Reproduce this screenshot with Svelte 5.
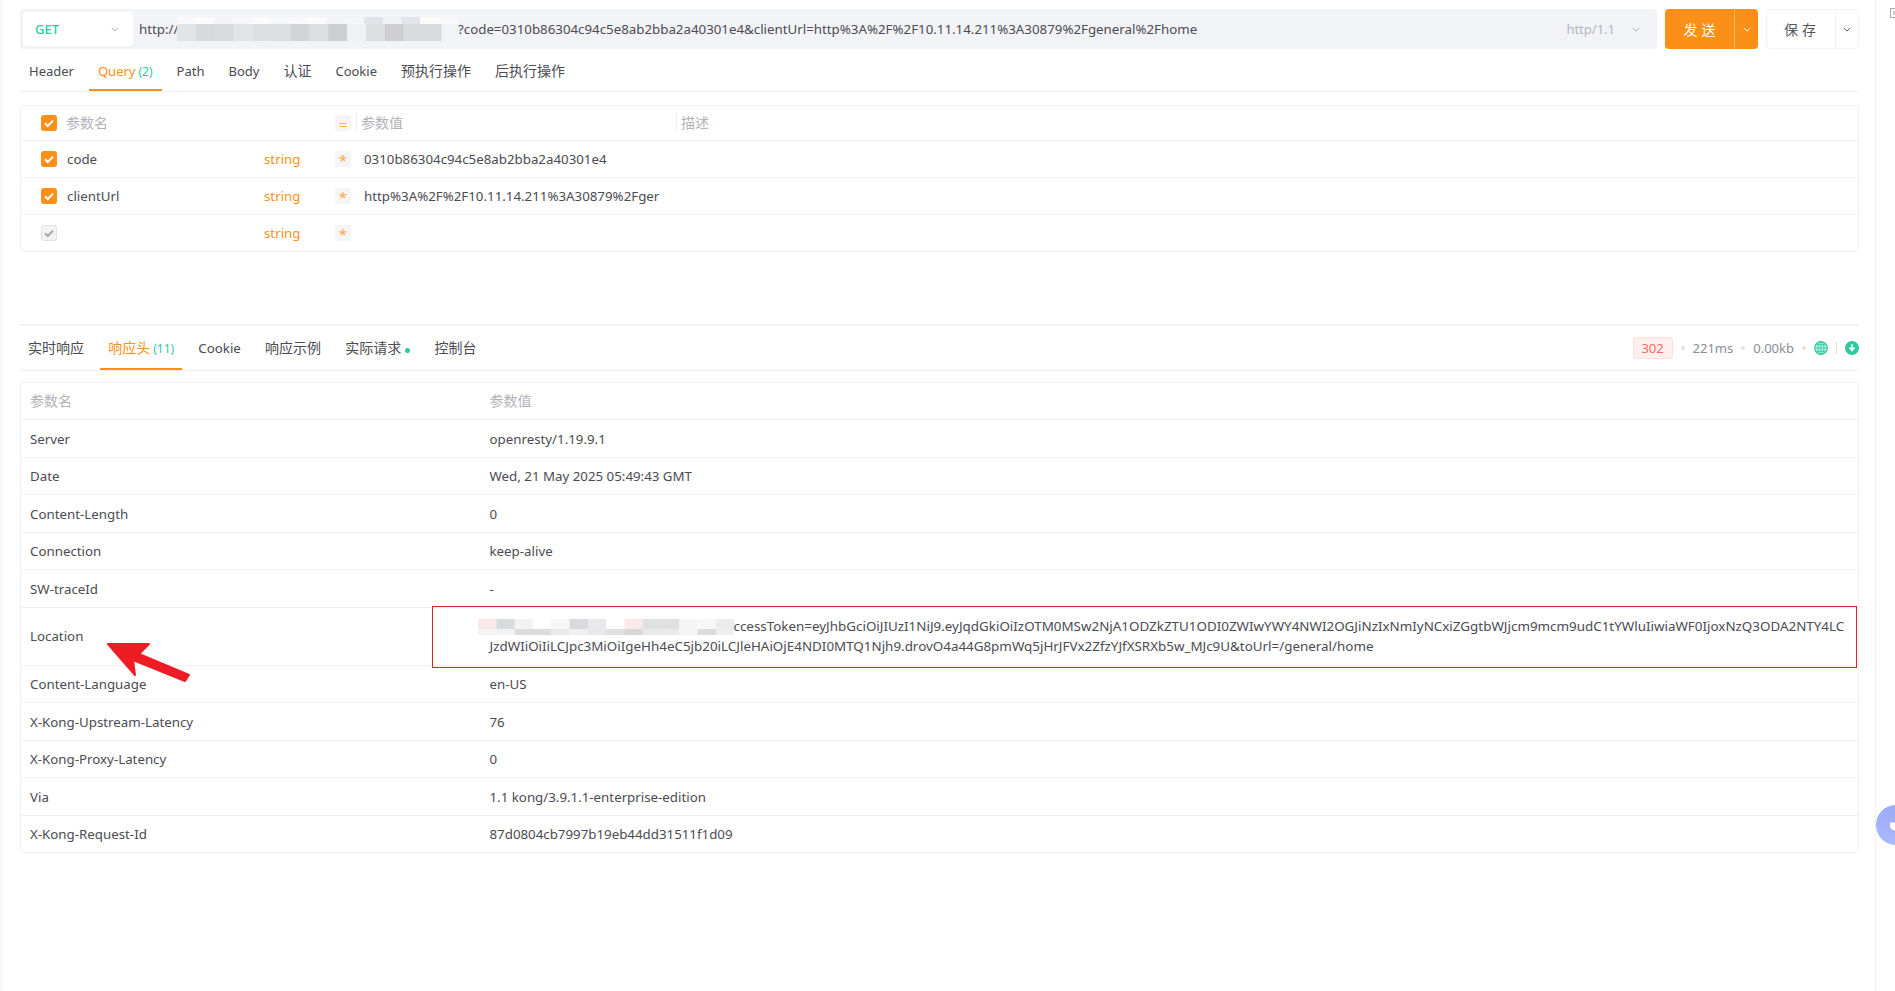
<script>
  const urlTop = ['#f9f9fb','#fbfbfc','#f3f4f8','#f8f8fa','#fbfbfc','#f7f8fa','#f9f9fb','#fbfbfc','#f2f3f7','#f5f6f9','#e2e4e9','#f0f1f5','#e3e5ea','#fbfbfc','#f9f9fb'];
  const urlBottom = ['#e2e5e8','#d8d9dd','#d9dadd','#e2e4e6','#dedfe2','#dcdee2','#d2d4d8','#dcdee1','#cdced1','#eff1f4','#dcdee2','#cfcfd1','#d9dade','#d9dadc'];
  const locTop = ['#fbe8ea','#d9dadb','#f2f2f2','#ffffff','#f5f6f6','#d9d9de','#e9e9eb','#ffffff','#fbe8ea','#e0e0e1','#e0e0e1','#f5f5f5','#f7f7f7','#ececec'];
  const locBottom = ['#f4f4f5','#f2f2f2','#dcdcdc','#dcdcdc','#eaeaea','#f0f0f0','#e8e8e8','#e0e0e2','#d8d8da','#e8e8e8','#eaeaea','#f5f5f5','#dcdcdc','#eeeeee'];

  const tabs = ['Header', 'Query', 'Path', 'Body', '认证', 'Cookie', '预执行操作', '后执行操作'];
  const isZh = (t) => /[^\x00-\x7f]/.test(t);
  const params = [
    { name: 'code', value: '0310b86304c94c5e8ab2bba2a40301e4', on: true },
    { name: 'clientUrl', value: 'http%3A%2F%2F10.11.14.211%3A30879%2Fger', on: true },
    { name: '', value: '', on: false }
  ];
  const headTop = [
    ['Server', 'openresty/1.19.9.1'],
    ['Date', 'Wed, 21 May 2025 05:49:43 GMT'],
    ['Content-Length', '0'],
    ['Connection', 'keep-alive'],
    ['SW-traceId', '-']
  ];
  const headBottom = [
    ['Content-Language', 'en-US'],
    ['X-Kong-Upstream-Latency', '76'],
    ['X-Kong-Proxy-Latency', '0'],
    ['Via', '1.1 kong/3.9.1.1-enterprise-edition'],
    ['X-Kong-Request-Id', '87d0804cb7997b19eb44dd31511f1d09']
  ];
</script>

{#snippet chevron(cls)}
  <svg class={cls} viewBox="0 0 10 6" width="8" height="5"><path d="M1 1l4 4 4-4" fill="none" stroke="currentColor" stroke-width="1.2"/></svg>
{/snippet}

{#snippet check(on)}
  <span class="chk" class:off={!on}>
    <svg viewBox="0 0 16 16" width="16" height="16"><path d="M4 8.2l2.8 2.8L12 5.6" fill="none" stroke={on ? '#fff' : '#a8a8a8'} stroke-width="2"/></svg>
  </span>
{/snippet}

<div class="page">
  <div class="strip"></div>
  <main class="main">
    <section class="request">
      <div class="toolbar">
        <div class="urlbar">
          <div class="method"><span>GET</span>{@render chevron('chev')}</div>
          <div class="url">
            <span class="scheme">http://</span>
            <svg class="mosaic-url" width="281" height="24" viewBox="0 0 281 24">
              {#each urlTop as c, i}<rect x={i * 18.7} y="0" width="19" height="7" fill={c} />{/each}
              {#each urlBottom as c, i}<rect x={i * 18.9} y="7" width="19" height="17" fill={c} />{/each}
            </svg>
            <span>?code=0310b86304c94c5e8ab2bba2a40301e4&amp;clientUrl=http%3A%2F%2F10.11.14.211%3A30879%2Fgeneral%2Fhome</span>
          </div>
          <div class="proto"><span>http/1.1</span>{@render chevron('chev')}</div>
        </div>
        <div class="send"><span class="send-l">发送</span><span class="send-r">{@render chevron('chev')}</span></div>
        <div class="save"><span class="save-l">保存</span><span class="save-r">{@render chevron('chev')}</span></div>
      </div>

      <nav class="tabs req-tabs">
        {#each tabs as t}
          <span class="tab" class:zh={isZh(t)} class:active={t === 'Query'}>{t}{#if t === 'Query'}<em>(2)</em>{/if}</span>
        {/each}
      </nav>

      <div class="qtable">
        <div class="qrow head">
          {@render check(true)}
          <span class="qname muted wide">参数名</span>
          <span class="tag eq">=</span>
          <span class="qval muted split">参数值</span>
          <span class="muted split desc">描述</span>
        </div>
        {#each params as p}
          <div class="qrow">
            {@render check(p.on)}
            <span class="qname">{p.name}</span>
            <span class="qtype">string</span>
            <span class="tag star">*</span>
            <span class="qval">{p.value}</span>
          </div>
        {/each}
      </div>
    </section>

    <section class="response">
      <div class="res-tabs-row">
        <nav class="tabs res-tabs">
          <span class="tab zh">实时响应</span>
          <span class="tab zh active">响应头<em>(11)</em></span>
          <span class="tab">Cookie</span>
          <span class="tab zh">响应示例</span>
          <span class="tab zh">实际请求<i class="live"></i></span>
          <span class="tab zh">控制台</span>
        </nav>
        <div class="status">
          <span class="code">302</span>
          <i class="sep"></i><span>221ms</span>
          <i class="sep"></i><span>0.00kb</span>
          <i class="sep"></i>
          <svg class="globe" viewBox="0 0 14 14" width="14" height="14">
            <circle cx="7" cy="7" r="6.3" fill="#dff6ee" stroke="#2bcb9f" stroke-width="1.2"/>
            <ellipse cx="7" cy="7" rx="3" ry="6.3" fill="none" stroke="#2bcb9f" stroke-width="1"/>
            <path d="M7 .7v12.6M.7 7h12.6M1.6 3.8h10.8M1.6 10.2h10.8" stroke="#2bcb9f" stroke-width="1" fill="none"/>
          </svg>
          <i class="bar"></i>
          <svg viewBox="0 0 14 14" width="14" height="14">
            <circle cx="7" cy="7" r="7" fill="#2bcb9f"/>
            <path d="M7 3.2v5M4.4 6.6L7 9.6l2.6-3" fill="none" stroke="#fff" stroke-width="1.6"/>
          </svg>
        </div>
      </div>

      <div class="rtable">
        <div class="rrow rhead"><span class="k">参数名</span><span class="v">参数值</span></div>
        {#each headTop as [k, v]}
          <div class="rrow"><span class="k">{k}</span><span class="v">{v}</span></div>
        {/each}
        <div class="rrow loc">
          <span class="k">Location</span>
          <span class="v locv">
            <svg class="mosaic-loc" width="256" height="16" viewBox="0 0 256 16">
              {#each locTop as c, i}<rect x={i * 18.3} y="0" width="18.5" height="10" fill={c} />{/each}
              {#each locBottom as c, i}<rect x={i * 18.3} y="10" width="18.5" height="6" fill={c} />{/each}
            </svg><span>ccessToken=eyJhbGciOiJIUzI1NiJ9.eyJqdGkiOiIzOTM0MSw2NjA1ODZkZTU1ODI0ZWIwYWY4NWI2OGJiNzIxNmIyNCxiZGgtbWJjcm9mcm9udC1tYWluIiwiaWF0IjoxNzQ3ODA2NTY4LC</span><br />JzdWIiOiIiLCJpc3MiOiIgeHh4eC5jb20iLCJleHAiOjE4NDI0MTQ1Njh9.drovO4a44G8pmWq5jHrJFVx2ZfzYJfXSRXb5w_MJc9U&amp;toUrl=/general/home
          </span>
          <div class="redbox"></div>
          <svg class="arrow" width="100" height="50" viewBox="0 0 100 50">
            <path d="M2 2H43L33 12 83 33 79 39 27 18 29 33Z" fill="#ee1c25" stroke="#ee1c25" stroke-width="2" stroke-linejoin="round"/>
          </svg>
        </div>
        {#each headBottom as [k, v]}
          <div class="rrow"><span class="k">{k}</span><span class="v">{v}</span></div>
        {/each}
      </div>
    </section>
  </main>
  <aside class="gutter">
    <span class="mini"><i></i></span>
    <div class="bubble"><svg viewBox="0 0 20 20" width="20" height="20"><path d="M14 8c3-2 6 0 6 2v5c-3 1-6-1-6-4z" fill="#fff"/></svg></div>
  </aside>
</div>

<style>
  :global(body) {
    margin: 0;
    background: #fff;
    font-family: "Noto Sans", "Noto Sans CJK SC", sans-serif;
    font-size: 13.3px;
    color: #4b4b52;
    overflow: hidden;
  }
  .page { display: flex; width: 1895px; height: 991px; overflow: hidden; }
  .strip { flex: 0 0 3px; background: #f7f8fa; }
  .main {
    flex: 0 0 1873px;
    box-sizing: border-box;
    padding: 0 16px 0 17px;
    border-right: 1px solid #f1f1f3;
  }
  .gutter { position: relative; flex: 1; }

  .request { height: 324px; }
  .toolbar { display: flex; padding-top: 9px; height: 40px; }
  .urlbar {
    flex: 0 0 1637px;
    display: flex;
    align-items: center;
    background: #f2f3f7;
    border-radius: 4px;
    padding: 0 3px;
    box-sizing: border-box;
  }
  .method {
    flex: 0 0 110px;
    height: 34px;
    box-sizing: border-box;
    background: #fff;
    border-radius: 4px;
    display: flex;
    align-items: center;
    justify-content: space-between;
    padding: 0 14px 0 12px;
    color: #2bcb9f;
    font-weight: 500;
    font-size: 13px;
  }
  .chev { display: block; color: #a8abb2; }
  .url { flex: 1; display: flex; align-items: center; padding-left: 6px; white-space: nowrap; min-width: 0; color: #4b4b52; }
  .scheme { width: 38px; }
  .mosaic-url { flex: none; }
  .proto { display: flex; align-items: center; gap: 17px; padding-right: 14px; color: #b4b7bf; font-size: 13px; }
  .send {
    margin-left: 8px;
    flex: 0 0 93px;
    display: flex;
    background: #fc8f17;
    border-radius: 4px;
    color: #fff;
    align-items: stretch;
  }
  .send-l { flex: 0 0 69px; display: flex; align-items: center; justify-content: center; letter-spacing: 4px; font-size: 14px; text-indent: 4px; }
  .send-r { flex: 1; display: flex; align-items: center; justify-content: center; border-left: 1px solid #fdb560; }
  .send-r .chev { color: #fff; }
  .save {
    margin-left: 8px;
    flex: 0 0 93px;
    box-sizing: border-box;
    display: flex;
    border: 1px solid #f2f3f5;
    border-radius: 4px;
    color: #55555c;
  }
  .save-l { flex: 0 0 68px; display: flex; align-items: center; justify-content: center; letter-spacing: 4px; font-size: 14px; text-indent: 2px; }
  .save-r { flex: 1; display: flex; align-items: center; justify-content: center; border-left: 1px solid #f2f3f5; }
  .save-r .chev { color: #55555c; }

  .tabs { display: flex; }
  .tab { position: relative; white-space: nowrap; }
  .tab.zh { font-size: 14px; }
  .tab em { font-style: normal; color: #2bcb9f; font-size: 12px; margin-left: 3px; }
  .tab.active { color: #fc8f17; }
  .tab.active::after {
    content: "";
    position: absolute;
    left: -9px;
    right: -9px;
    bottom: 0;
    height: 2px;
    background: #fc8f17;
  }
  .req-tabs {
    height: 42px;
    box-sizing: content-box;
    border-bottom: 1px solid #f1f1f3;
    padding-left: 9px;
    gap: 24px;
    font-size: 13px;
  }
  .req-tabs .tab { line-height: 44px; height: 42px; }

  .qtable { margin-top: 13px; border: 1px solid #f1f1f3; border-radius: 4px; }
  .qrow {
    display: flex;
    align-items: center;
    height: 36px;
    padding-left: 20px;
    border-bottom: 1px solid #f1f1f3;
  }
  .qrow:last-child { border-bottom: 0; }
  .qrow.head { height: 34px; }
  .chk {
    flex: 0 0 16px;
    height: 16px;
    border-radius: 3px;
    background: #fc8f17;
    margin-right: 9px;
  }
  .chk.off { background: #f3f3f3; box-shadow: inset 0 0 0 1px #e2e2e2; }
  .chk svg { display: block; }
  .qname { flex: 0 0 197px; padding-left: 1px; }
  .qname.wide { flex: 0 0 270px; padding-left: 0; }
  .qtype { flex: 0 0 71px; color: #fc8f17; }
  .tag {
    flex: 0 0 16px;
    height: 16px;
    line-height: 18px;
    text-align: center;
    background: #f5f5f6;
    border-radius: 2px;
    color: #fca850;
    font-size: 15px;
  }
  .eq { margin-left: -1px; }
  .qval { flex: 0 0 312px; margin-left: 13px; }
  .head .qval { flex: 0 0 314px; margin-left: 10px; }
  .muted { color: #b2b2b8; font-size: 14px; margin-top: -2px; }
  .split { position: relative; }
  .split::before {
    content: "";
    position: absolute;
    left: -5px;
    top: 0;
    bottom: 0;
    width: 1px;
    background: #f1f1f3;
  }
  .desc { margin-left: 6px; }

  .response { border-top: 2px solid #f1f1f3; }
  .res-tabs-row {
    display: flex;
    justify-content: space-between;
    height: 44px;
    border-bottom: 1px solid #f1f1f3;
    padding-left: 8px;
  }
  .res-tabs { gap: 24.2px; }
  .res-tabs .tab { line-height: 44px; height: 44px; }
  .res-tabs .tab.active::after { left: -8px; right: -8px; }
  .live { display: inline-block; width: 5px; height: 5px; border-radius: 50%; background: #2bcb9f; margin-left: 4px; vertical-align: 0; }
  .status { display: flex; align-items: center; color: #8a8d96; font-size: 13px; }
  .code {
    width: 40px;
    height: 22px;
    box-sizing: border-box;
    border: 1px solid #fde0dc;
    background: #fff0ee;
    border-radius: 3px;
    color: #f56a5e;
    text-align: center;
    line-height: 20px;
  }
  .sep { width: 4px; height: 4px; border-radius: 50%; background: #e2e2e5; margin: 0 8px; }
  .bar { width: 1px; height: 12px; background: #e2e2e5; margin: 0 8px; }
  .globe { display: block; }

  .rtable { margin-top: 11px; border: 1px solid #f1f1f3; border-radius: 4px; }
  .rrow {
    display: flex;
    align-items: center;
    box-sizing: border-box;
    height: 37.5px;
    padding-top: 1px;
    border-bottom: 1px solid #f1f1f3;
  }
  .rrow:last-child { border-bottom: 0; height: 36.5px; }
  .rhead { height: 37px; padding-top: 0; color: #b2b2b8; font-size: 14px; }
  .rhead span { margin-top: -3px; }
  .k { flex: 0 0 468.5px; padding-left: 9px; box-sizing: border-box; }
  .v { flex: 1; }
  .loc { position: relative; height: 58px; padding-top: 0; }
  .locv { line-height: 20px; white-space: nowrap; font-size: 13.4px; }
  .mosaic-loc { margin-left: -12px; vertical-align: -4px; }
  .redbox {
    position: absolute;
    left: 411px;
    top: -2px;
    right: 1px;
    bottom: -3px;
    border: 1px solid #e81c2a;
    pointer-events: none;
  }
  .arrow { position: absolute; left: 85px; top: 34px; overflow: visible; }

  .mini {
    position: absolute;
    left: 14px;
    top: 8px;
    width: 10px;
    height: 10px;
    border: 1px solid #a8a8a8;
    box-sizing: border-box;
    background: #fff;
  }
  .mini i { position: absolute; left: 2px; top: 2px; width: 3px; height: 4px; background: #ccc; }
  .bubble {
    position: absolute;
    left: 0;
    top: 805px;
    width: 40px;
    height: 40px;
    border-radius: 50%;
    background: linear-gradient(#9dabf5, #aab8ff);
    overflow: hidden;
  }
  .bubble svg { position: absolute; left: 0; top: 10px; }
</style>
